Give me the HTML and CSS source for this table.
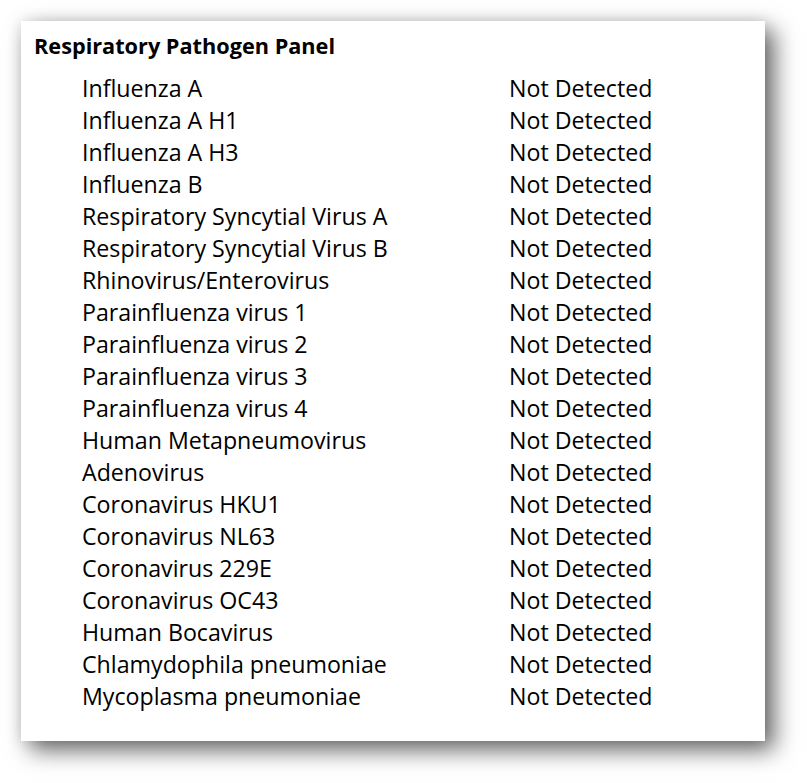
FILE: index.html
```html
<!DOCTYPE html>
<html>
<head>
<meta charset="utf-8">
<link rel="stylesheet" href="styles.css">
</head>
<body>
<div class="card">
  <div class="title">Respiratory Pathogen Panel</div>
  <div class="results">
    <div>Influenza A</div><div>Not Detected</div>
    <div>Influenza A H1</div><div>Not Detected</div>
    <div>Influenza A H3</div><div>Not Detected</div>
    <div>Influenza B</div><div>Not Detected</div>
    <div>Respiratory Syncytial Virus A</div><div>Not Detected</div>
    <div>Respiratory Syncytial Virus B</div><div>Not Detected</div>
    <div>Rhinovirus/Enterovirus</div><div>Not Detected</div>
    <div>Parainfluenza virus 1</div><div>Not Detected</div>
    <div>Parainfluenza virus 2</div><div>Not Detected</div>
    <div>Parainfluenza virus 3</div><div>Not Detected</div>
    <div>Parainfluenza virus 4</div><div>Not Detected</div>
    <div>Human Metapneumovirus</div><div>Not Detected</div>
    <div>Adenovirus</div><div>Not Detected</div>
    <div>Coronavirus HKU1</div><div>Not Detected</div>
    <div>Coronavirus NL63</div><div>Not Detected</div>
    <div>Coronavirus 229E</div><div>Not Detected</div>
    <div>Coronavirus OC43</div><div>Not Detected</div>
    <div>Human Bocavirus</div><div>Not Detected</div>
    <div>Chlamydophila pneumoniae</div><div>Not Detected</div>
    <div>Mycoplasma pneumoniae</div><div>Not Detected</div>
  </div>
</div>
</body>
</html>
```
FILE: styles.css
```css
html, body {
  margin: 0;
  padding: 0;
  background: #ffffff;
}
body {
  font-family: "Open Sans", "Noto Sans", sans-serif;
  color: #000;
  padding: 21px 0 42px 21px;
}
.card {
  width: 744px;
  height: 720px;
  box-sizing: border-box;
  background: #fff;
  box-shadow: 9px 9px 22px rgba(0,0,0,0.6), 0 0 14px rgba(0,0,0,0.1);
  padding: 9px 0 0 13px;
}
.title {
  font-weight: 700;
  font-size: 21.7px;
  line-height: 32px;
}
.results {
  display: grid;
  grid-template-columns: 427px auto;
  margin-left: 48px;
  margin-top: 10px;
  font-size: 23.2px;
  line-height: 32px;
}
```
